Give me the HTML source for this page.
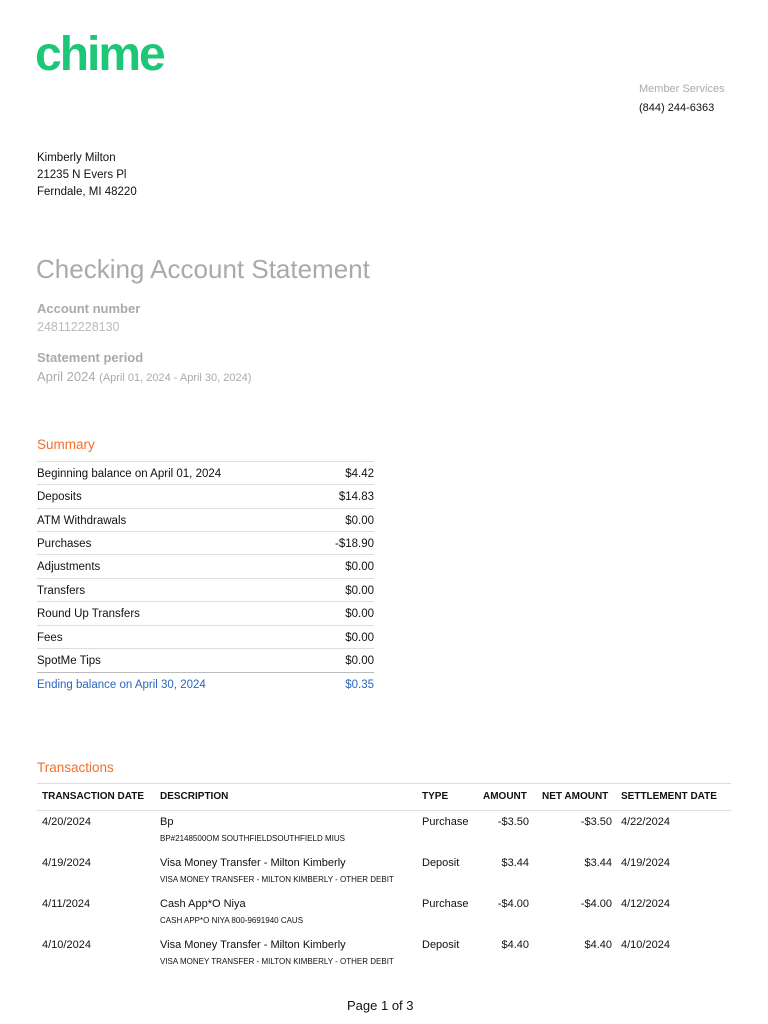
<!DOCTYPE html><html><head><style>
body{margin:0;width:768px;height:1024px;background:#fff;font-family:"Liberation Sans",sans-serif;position:relative;overflow:hidden;color:#111}
.a{position:absolute;white-space:nowrap}
.row{position:absolute;left:37px;width:337px;font-size:11.5px;border-top:1px solid #ddd;height:23px;line-height:25px}
.row span{position:absolute;right:0}
.th{position:absolute;font-size:10px;font-weight:bold;top:791px}
.td{position:absolute;font-size:11px}
.sm{position:absolute;font-size:8px}
</style></head><body>
<div class="a" style="left:35px;top:27px;font-size:48px;font-weight:bold;color:#1ec677;letter-spacing:-2px">chime</div>
<div class="a" style="left:639px;top:83px;font-size:11px;color:#aaa">Member Services</div>
<div class="a" style="left:639px;top:102px;font-size:11px">(844) 244-6363</div>
<div class="a" style="left:37px;top:150px;font-size:11.5px;line-height:17px">Kimberly Milton<br>21235 N Evers Pl<br>Ferndale, MI 48220</div>
<div class="a" style="left:36px;top:254px;font-size:26px;color:#aaa">Checking Account Statement</div>
<div class="a" style="left:37px;top:301px;font-size:13px;font-weight:bold;color:#aaa">Account number</div>
<div class="a" style="left:37px;top:320px;font-size:12.5px;color:#bbb">248112228130</div>
<div class="a" style="left:37px;top:350px;font-size:13px;font-weight:bold;color:#aaa">Statement period</div>
<div class="a" style="left:37px;top:369px;font-size:13px;color:#aaa">April 2024 <span style="font-size:11px">(April 01, 2024 - April 30, 2024)</span></div>
<div class="a" style="left:37px;top:437px;font-size:13.5px;color:#f36f2a">Summary</div>
<div class="row" style="top:461px">Beginning balance on April 01, 2024<span>$4.42</span></div>
<div class="row" style="top:484px">Deposits<span>$14.83</span></div>
<div class="row" style="top:508px">ATM Withdrawals<span>$0.00</span></div>
<div class="row" style="top:531px">Purchases<span>-$18.90</span></div>
<div class="row" style="top:554px">Adjustments<span>$0.00</span></div>
<div class="row" style="top:578px">Transfers<span>$0.00</span></div>
<div class="row" style="top:601px">Round Up Transfers<span>$0.00</span></div>
<div class="row" style="top:625px">Fees<span>$0.00</span></div>
<div class="row" style="top:648px">SpotMe Tips<span>$0.00</span></div>
<div class="row" style="top:672px;color:#2a66c0;border-top:1px solid #bbb">Ending balance on April 30, 2024<span>$0.35</span></div>
<div class="a" style="left:37px;top:760px;font-size:13.5px;color:#f36f2a">Transactions</div>
<div class="a" style="left:37px;top:783px;width:694px;border-top:1px solid #ddd"></div>
<div class="a" style="left:37px;top:810px;width:694px;border-top:1px solid #ddd"></div>
<div class="th" style="left:42px">TRANSACTION DATE</div>
<div class="th" style="left:160px">DESCRIPTION</div>
<div class="th" style="left:422px">TYPE</div>
<div class="th" style="left:483px">AMOUNT</div>
<div class="th" style="left:542px">NET AMOUNT</div>
<div class="th" style="left:621px">SETTLEMENT DATE</div>
<div id="tx"></div>
<script>
var d=[["4/20/2024","Bp","BP#2148500OM SOUTHFIELDSOUTHFIELD MIUS","Purchase","-$3.50","4/22/2024"],
["4/19/2024","Visa Money Transfer - Milton Kimberly","VISA MONEY TRANSFER - MILTON KIMBERLY - OTHER DEBIT","Deposit","$3.44","4/19/2024"],
["4/11/2024","Cash App*O Niya","CASH APP*O NIYA 800-9691940 CAUS","Purchase","-$4.00","4/12/2024"],
["4/10/2024","Visa Money Transfer - Milton Kimberly","VISA MONEY TRANSFER - MILTON KIMBERLY - OTHER DEBIT","Deposit","$4.40","4/10/2024"]];
var h="";d.forEach(function(r,i){var t=816+i*41;
h+='<div class="td" style="left:42px;top:'+t+'px">'+r[0]+'</div><div class="td" style="left:160px;top:'+t+'px">'+r[1]+'</div><div class="sm" style="left:160px;top:'+(t+18)+'px">'+r[2]+'</div><div class="td" style="left:422px;top:'+t+'px">'+r[3]+'</div><div class="td" style="right:239px;top:'+t+'px">'+r[4]+'</div><div class="td" style="right:156px;top:'+t+'px">'+r[4]+'</div><div class="td" style="left:621px;top:'+t+'px">'+r[5]+'</div>';});
document.getElementById("tx").innerHTML=h;
</script>
<div class="a" style="left:347px;top:998px;font-size:13px">Page 1 of 3</div>
</body></html>
